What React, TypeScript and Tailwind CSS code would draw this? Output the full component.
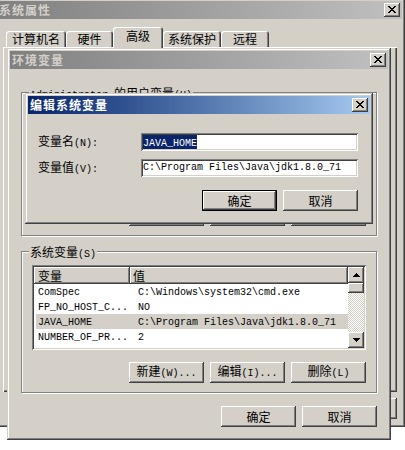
import React from "react";

const raised =
  "shadow-[inset_-1px_-1px_0_#404040,inset_1px_1px_0_#ffffff,inset_-2px_-2px_0_#808080,inset_2px_2px_0_#d4d0c8]";
const defaultRaised =
  "shadow-[inset_0_0_0_1px_#000000,inset_-2px_-2px_0_#404040,inset_2px_2px_0_#ffffff,inset_-3px_-3px_0_#808080]";
const frame =
  "shadow-[inset_-1px_-1px_0_#404040,inset_1px_1px_0_#d4d0c8,inset_-2px_-2px_0_#808080,inset_2px_2px_0_#ffffff]";
const sunken =
  "shadow-[inset_1px_1px_0_#808080,inset_-1px_-1px_0_#ffffff,inset_2px_2px_0_#404040,inset_-2px_-2px_0_#d4d0c8]";

// ASCII runs in a 6px-per-char mono face, CJK in Noto at 12px
function Txt({ s }: { s: string }) {
  const parts = s.split(/([\x20-\x7e]+)/).filter(Boolean);
  return (
    <>
      {parts.map((p, i) =>
        /^[\x20-\x7e]+$/.test(p) ? (
          <span
            key={i}
            className="font-['Liberation_Mono',monospace] text-[10px] whitespace-pre"
          >
            {p}
          </span>
        ) : (
          <span key={i}>{p}</span>
        )
      )}
    </>
  );
}

function CloseBox() {
  return (
    <div className={`w-[16px] h-[14px] bg-[#d4d0c8] pl-[4px] pt-[3px] ${raised}`}>
      <svg
        width="8"
        height="7"
        viewBox="0 0 8 7"
        shapeRendering="crispEdges"
        className="block"
      >
        <path
          d="M0 0h2v1H0zM6 0h2v1H6zM1 1h2v1H1zM5 1h2v1H5zM2 2h4v1H2zM3 3h2v1H3zM2 4h4v1H2zM1 5h2v1H1zM5 5h2v1H5zM0 6h2v1H0zM6 6h2v1H6z"
          fill="#000"
        />
      </svg>
    </div>
  );
}

function TitleBar({ title, active }: { title: string; active?: boolean }) {
  return (
    <div
      className={
        active
          ? "h-[18px] shrink-0 flex items-center justify-between pl-[2px] pr-[2px] bg-linear-to-r from-[#0a246a] to-[#a6caf0] text-white"
          : "h-[18px] shrink-0 flex items-center justify-between pl-[2px] pr-[2px] bg-linear-to-r from-[#808080] to-[#c0c0c0] text-[#d4d0c8]"
      }
    >
      <span className="font-bold tracking-[1px]">{title}</span>
      <CloseBox />
    </div>
  );
}

// label left out for buttons that sit fully behind another window
function Btn({ label, def }: { label?: string; def?: boolean }) {
  return (
    <div
      className={`w-[75px] h-[21px] shrink-0 flex items-center justify-center bg-[#d4d0c8] ${
        def ? defaultRaised : raised
      }`}
    >
      {label && (
        <span className="whitespace-pre">
          <Txt s={label} />
        </span>
      )}
    </div>
  );
}

function Tab({ label, w, selected }: { label: string; w: string; selected?: boolean }) {
  return (
    <div
      className={`${w} ${
        selected ? "h-[21px] pt-[3px]" : "h-[16px] mb-[1px] pt-[2px]"
      } flex justify-center bg-[#d4d0c8] rounded-t-[3px] shadow-[inset_1px_1px_0_#ffffff,inset_-1px_0_0_#404040,inset_-2px_0_0_#808080]`}
    >
      {label}
    </div>
  );
}

function Group({
  label,
  className,
  children,
}: {
  label: string;
  className: string;
  children: React.ReactNode;
}) {
  return (
    <div
      className={`mx-[11px] flex flex-col border border-[#808080] shadow-[1px_1px_0_#ffffff,inset_1px_1px_0_#ffffff] ${className}`}
    >
      <span className="self-start -mt-[6px] ml-[7px] px-[1px] h-[12px] bg-[#d4d0c8] whitespace-pre">
        <Txt s={label} />
      </span>
      {children}
    </div>
  );
}

function Arrow({ down }: { down?: boolean }) {
  return (
    <svg width="7" height="4" viewBox="0 0 7 4" shapeRendering="crispEdges" className="block">
      <path
        d={
          down
            ? "M0 0h7v1H0zM1 1h5v1H1zM2 2h3v1H2zM3 3h1v1H3z"
            : "M3 0h1v1H3zM2 1h3v1H2zM1 2h5v1H1zM0 3h7v1H0z"
        }
        fill="#000"
      />
    </svg>
  );
}

const sysVars = [
  ["ComSpec", "C:\\Windows\\system32\\cmd.exe"],
  ["FP_NO_HOST_C...", "NO"],
  ["JAVA_HOME", "C:\\Program Files\\Java\\jdk1.8.0_71"],
  ["NUMBER_OF_PR...", "2"],
];

export default function App() {
  return (
    <div className="relative w-[405px] h-[450px] overflow-hidden bg-white font-['Noto_Sans_CJK_SC',sans-serif] text-[12px] leading-[12px] text-black">
      {/* 系统属性 */}
      <div
        className={`absolute left-[-6px] top-[-2px] w-[411px] h-[429px] bg-[#d4d0c8] p-[3px] flex flex-col ${frame}`}
      >
        <TitleBar title="系统属性" />
        <div className="relative z-10 mt-[8px] ml-[9px] h-[21px] flex items-end">
          <Tab label="计算机名" w="w-[60px]" />
          <Tab label="硬件" w="w-[47px]" />
          <Tab label="高级" w="w-[50px]" selected />
          <Tab label="系统保护" w="w-[58px]" />
          <Tab label="远程" w="w-[48px]" />
        </div>
        <div className="h-[345px] shrink-0 ml-[6px] mr-[5px] -mt-[1px] shadow-[inset_1px_1px_0_#ffffff,inset_-1px_-1px_0_#404040,inset_-2px_-2px_0_#808080]" />
        <div className="mt-[6px] mr-[5px] flex justify-end gap-[6px]">
          <Btn />
          <Btn />
          <Btn />
        </div>
      </div>

      {/* 环境变量 */}
      <div
        className={`absolute left-[7px] top-[48px] w-[384px] h-[392px] bg-[#d4d0c8] p-[3px] flex flex-col ${frame}`}
      >
        <TitleBar title="环境变量" />
        <Group label="Administrator 的用户变量(U)" className="mt-[23px]">
          <div className={`mt-[7px] ml-[10px] w-[334px] h-[87px] bg-white ${sunken}`} />
          <div className="mt-[12px] mb-[9px] pr-[10px] flex justify-end gap-[6px]">
            <Btn />
            <Btn />
            <Btn />
          </div>
        </Group>
        <Group label="系统变量(S)" className="mt-[15px]">
          <div className={`mt-[7px] ml-[10px] w-[334px] h-[85px] bg-white p-[2px] flex ${sunken}`}>
            <div className="flex-1 flex flex-col overflow-hidden">
              <div className="h-[17px] shrink-0 flex">
                <div className={`w-[96px] pl-[4px] flex items-center bg-[#d4d0c8] ${raised}`}>变量</div>
                <div className={`flex-1 pl-[3px] flex items-center bg-[#d4d0c8] ${raised}`}>值</div>
              </div>
              {sysVars.map(([k, v]) => (
                <div
                  key={k}
                  className={
                    k === "JAVA_HOME"
                      ? "h-[15px] shrink-0 ml-[2px] flex items-center bg-[#d4d0c8]"
                      : "h-[15px] shrink-0 ml-[2px] flex items-center"
                  }
                >
                  <div className="w-[100px] pl-[2px] whitespace-pre">
                    <Txt s={k} />
                  </div>
                  <div className="pl-[2px] whitespace-pre">
                    <Txt s={v} />
                  </div>
                </div>
              ))}
            </div>
            <div className="w-[16px] flex flex-col">
              <div className={`h-[16px] flex items-center justify-center bg-[#d4d0c8] ${raised}`}>
                <Arrow />
              </div>
              <div className={`h-[10px] bg-[#d4d0c8] ${raised}`} />
              <div className="flex-1 bg-[repeating-conic-gradient(#d4d0c8_0_25%,#ffffff_0_50%)] bg-[length:2px_2px]" />
              <div className={`h-[16px] flex items-center justify-center bg-[#d4d0c8] ${raised}`}>
                <Arrow down />
              </div>
            </div>
          </div>
          <div className="mt-[12px] mb-[9px] pr-[10px] flex justify-end gap-[6px]">
            <Btn label="新建(W)..." />
            <Btn label="编辑(I)..." />
            <Btn label="删除(L)" />
          </div>
        </Group>
        <div className="mt-[13px] mr-[11px] flex justify-end gap-[6px]">
          <Btn label="确定" />
          <Btn label="取消" />
        </div>
      </div>

      {/* 编辑系统变量 */}
      <div
        className={`absolute left-[25px] top-[93px] w-[348px] h-[131px] bg-[#d4d0c8] p-[3px] flex flex-col ${frame}`}
      >
        <TitleBar title="编辑系统变量" active />
        <div className="mt-[19px] pl-[10px] grid grid-cols-[103px_217px] gap-y-[8px] items-center">
          <span className="whitespace-pre">
            <Txt s="变量名(N):" />
          </span>
          <div className={`h-[18px] bg-white pl-[2px] flex items-center ${sunken}`}>
            <span className="bg-[#0a246a] text-white leading-[11px]">
              <Txt s="JAVA_HOME" />
            </span>
          </div>
          <span className="whitespace-pre">
            <Txt s="变量值(V):" />
          </span>
          <div className={`h-[18px] bg-white pl-[2px] flex items-center ${sunken}`}>
            <Txt s="C:\Program Files\Java\jdk1.8.0_71" />
          </div>
        </div>
        <div className="mt-[13px] pr-[12px] flex justify-end gap-[6px]">
          <Btn label="确定" def />
          <Btn label="取消" />
        </div>
      </div>
    </div>
  );
}
